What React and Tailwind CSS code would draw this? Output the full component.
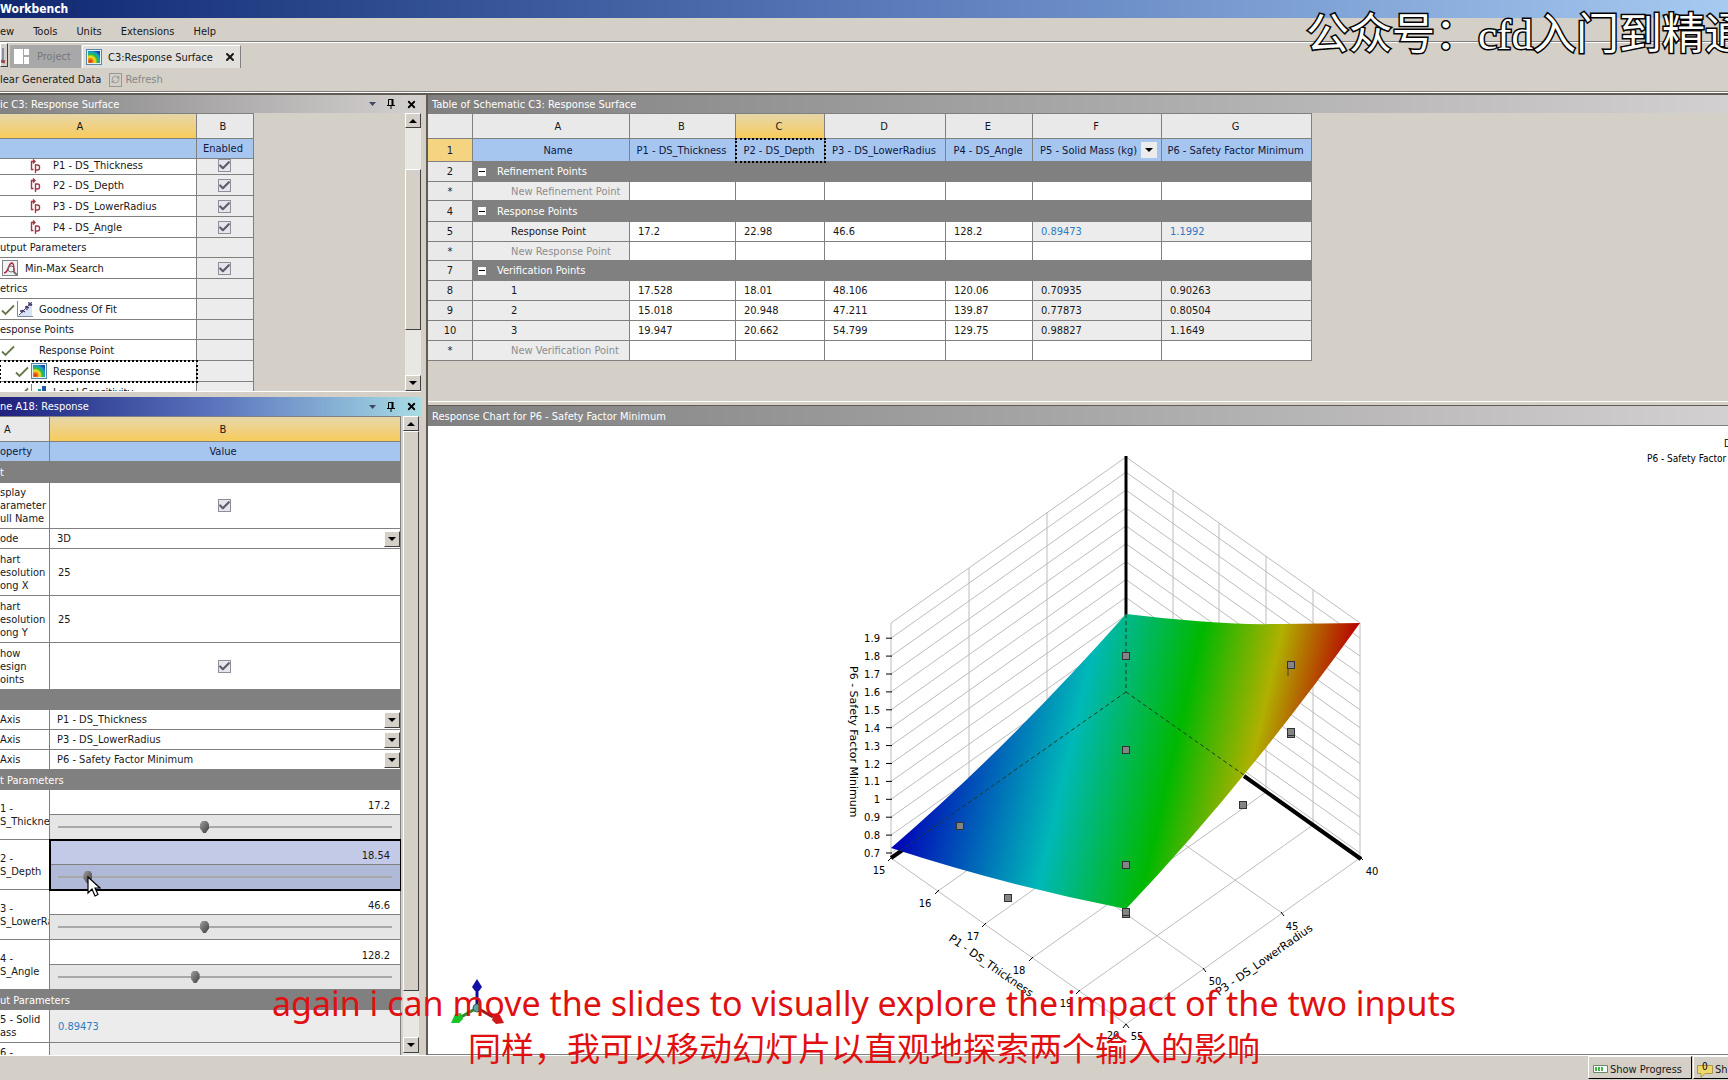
import { useState } from "react";
import { Check, X, RefreshCw } from "lucide-react";

const outlineRows = [
    { label: "P1 - DS_Thickness", kind: "param", height: "h-[16px] align-top", checked: true },
    { label: "P2 - DS_Depth", kind: "param", height: "h-[21px]", checked: true },
    { label: "P3 - DS_LowerRadius", kind: "param", height: "h-[21px]", checked: true },
    { label: "P4 - DS_Angle", kind: "param", height: "h-[21px]", checked: true },
    { label: "utput Parameters", kind: "group", height: "h-[20px]" },
    { label: "Min-Max Search", kind: "minmax", height: "h-[21px]", checked: true },
    { label: "etrics", kind: "group", height: "h-[20px]" },
    { label: "Goodness Of Fit", kind: "fit", height: "h-[21px]" },
    { label: "esponse Points", kind: "group", height: "h-[20px]" },
    { label: "Response Point", kind: "point", height: "h-[21px]" },
    { label: "Response", kind: "response", height: "h-[21px]", selected: true },
];

const pointRows = [
    { id: "2", type: "group", label: "Refinement Points", height: "h-[20px]" },
    { id: "*", type: "new", label: "New Refinement Point", height: "h-[19px]" },
    { id: "4", type: "group", label: "Response Points", height: "h-[21px]" },
    { id: "5", type: "response", label: "Response Point", height: "h-[20px]", values: ["17.2", "22.98", "46.6", "128.2", "0.89473", "1.1992"] },
    { id: "*", type: "new", label: "New Response Point", height: "h-[19px]" },
    { id: "7", type: "group", label: "Verification Points", height: "h-[20px]" },
    { id: "8", type: "verify", label: "1", height: "h-[20px]", values: ["17.528", "18.01", "48.106", "120.06", "0.70935", "0.90263"] },
    { id: "9", type: "verify", label: "2", height: "h-[20px]", values: ["15.018", "20.948", "47.211", "139.87", "0.77873", "0.80504"] },
    { id: "10", type: "verify", label: "3", height: "h-[20px]", values: ["19.947", "20.662", "54.799", "129.75", "0.98827", "1.1649"] },
    { id: "*", type: "new", label: "New Verification Point", height: "h-[20px]" },
];

const cell = "border-r border-b border-[#808080] p-0";
const raised = "border border-t-white border-l-white border-r-[#404040] border-b-[#404040] bg-[#d4d0c8]";

const CheckBox = ({ label }) => (
    <label className="relative flex h-[13px] w-[13px]">
        <input
            type="checkbox"
            defaultChecked
            aria-label={label}
            className="peer h-[13px] w-[13px] appearance-none border border-[#8e8e9c] bg-[#e6e6ea]"
        />
        <Check className="pointer-events-none absolute inset-0 hidden h-[13px] w-[13px] text-[#5c5c6c] peer-checked:block" strokeWidth={4} />
    </label>
);

const DownArrow = () => (
    <svg viewBox="0 0 8 4" className="h-[4px] w-[8px]">
        <path d="M0 0h8L4 4z" />
    </svg>
);

const TickIcon = () => (
    <svg viewBox="0 0 14 14" className="h-[14px] w-[14px] shrink-0">
        <path d="M1 8.5 4.5 12 13 3.5" fill="none" stroke="#66784a" strokeWidth="1.8" />
    </svg>
);

const SurfaceIcon = () => (
    <svg viewBox="0 0 16 16" className="h-[16px] w-[16px] shrink-0">
        <defs>
            <radialGradient id="surface" cx="0.2" cy="0.85" r="1">
                <stop offset="0" stopColor="#e02010" />
                <stop offset="0.2" stopColor="#f08018" />
                <stop offset="0.38" stopColor="#f0e820" />
                <stop offset="0.58" stopColor="#30b840" />
                <stop offset="0.76" stopColor="#18a8c8" />
                <stop offset="1" stopColor="#1848a8" />
            </radialGradient>
        </defs>
        <rect x="0.5" y="0.5" width="15" height="15" fill="#e4f0f4" stroke="#5888a8" />
        <rect x="2" y="2" width="12" height="12" fill="url(#surface)" />
    </svg>
);

const ParamIcon = () => (
    <svg viewBox="0 0 16 16" className="h-[16px] w-[16px] shrink-0" fill="none" stroke="#a03848" strokeWidth="1.4">
        <path d="M4.500 3.500H1.500v8h2M3 1.500l2 2-2 2" />
        <path d="M5.500 15V7h2a2 2 0 0 1 2 2v1a2 2 0 0 1-2 2H5.500" />
    </svg>
);

const MinMaxIcon = () => (
    <svg viewBox="0 0 16 16" className="h-[16px] w-[16px] shrink-0" fill="none">
        <rect x="0.5" y="0.5" width="15" height="15" fill="#f2f2f4" stroke="#848488" />
        <path d="M2 13c5 0 4-10 8-10 2 0 2 5 2 9" stroke="#b02030" strokeWidth="1.6" />
        <circle cx="9" cy="9" r="3" stroke="#707078" />
        <path d="m11 11 4 4" stroke="#707078" strokeWidth="1.8" />
    </svg>
);

const FitIcon = () => (
    <svg viewBox="0 0 16 16" className="h-[16px] w-[16px] shrink-0" fill="none">
        <path d="M1 15 15 1v14z" fill="#d8e4f4" />
        <path d="M0.500 0v15.500H16" stroke="#8088a0" />
        <path d="M2 14 15 1" stroke="#584878" />
        <path d="M3 10h2v2M5 9l3 2M8 6h2v3M9 5l3 2M12 1v3h3M13 2l2 2" stroke="#483868" strokeWidth="1.300" />
    </svg>
);

const BarsIcon = () => (
    <svg viewBox="0 0 16 16" className="h-[16px] w-[16px] shrink-0">
        <path d="M0.500 0v16" stroke="#808898" />
        <path d="M7 5h3v11H7z" fill="#3090a8" />
        <path d="M11 2h4v14h-4z" fill="#2058a8" />
    </svg>
);

const PanelButtons = () => (
    <div className="flex items-center gap-[11px] pr-[4px] text-black">
        <button aria-label="Panel menu" className="text-[#404868]">
            <svg viewBox="0 0 7 4" className="h-[4px] w-[7px]" fill="currentColor">
                <path d="M0 0h7L3.500 4z" />
            </svg>
        </button>
        <button aria-label="Pin panel">
            <svg viewBox="0 0 8 10" className="h-[10px] w-[8px]" fill="none" stroke="#000">
                <path d="M1.500 6V0.500h4V6M0 6.500h8M4 7v3" />
                <path d="M5.500 0v6" strokeWidth="2" />
            </svg>
        </button>
        <button aria-label="Close panel">
            <X className="h-[11px] w-[11px]" strokeWidth={4} />
        </button>
    </div>
);

const ScrollBar = ({ children }) => (
    <div className="flex w-[16px] shrink-0 flex-col bg-[#e9e7e3]">
        <button aria-label="Scroll up" className={`flex h-[15px] items-center justify-center ${raised}`}>
            <svg viewBox="0 0 8 4" className="h-[4px] w-[8px]">
                <path d="M0 4h8L4 0z" />
            </svg>
        </button>
        {children}
        <button aria-label="Scroll down" className={`flex h-[16px] items-center justify-center ${raised}`}>
            <DownArrow />
        </button>
    </div>
);

const rowIcons = {
    param: <ParamIcon />,
    minmax: <MinMaxIcon />,
    fit: <><TickIcon /><FitIcon /></>,
    point: <><TickIcon /><span className="w-[16px]" /></>,
    response: <><TickIcon /><SurfaceIcon /></>,
};

const rowIndent = {
    param: "pl-[30px] gap-[7px]",
    minmax: "pl-[2px] gap-[7px]",
    fit: "pl-[1px] gap-[2px]",
    point: "pl-[1px] gap-[2px]",
    response: "pl-[15px] gap-[2px]",
    group: "",
};

const OutlinePanel = () => (
    <section className="flex h-[297px] w-[421px] shrink-0 flex-col border-b border-white">
        <div className="flex h-[18px] shrink-0 items-center justify-between bg-linear-to-r from-[#828282] to-[#d4d0d0] text-white">
            <h2>ic C3: Response Surface</h2>
            <PanelButtons />
        </div>
        <div className="flex min-h-0 flex-1 justify-between">
            <div className="overflow-hidden">
                <table className="w-[254px] table-fixed border-separate border-spacing-0 border-t border-[#808080] bg-white">
                    <thead>
                        <tr className="h-[25px]">
                            <th className={`${cell} w-[197px] bg-linear-to-b from-[#e6d6a8] to-[#f8cc58] font-normal`}><span className="pr-[36px]">A</span></th>
                            <th className={`${cell} bg-[#e9e9e9] font-normal`}><span className="pr-[4px]">B</span></th>
                        </tr>
                        <tr className="h-[20px] bg-[#a6c6f0]">
                            <td className={cell} />
                            <th className={`${cell} font-normal text-[#101840]`}><span className="pr-[4px]">Enabled</span></th>
                        </tr>
                    </thead>
                    <tbody>
                        {outlineRows.map((row) => (
                            <tr key={row.label} className={row.height}>
                                <td className={`${cell} ${row.selected ? "outline-2 -outline-offset-1 outline-dotted outline-black" : ""}`}>
                                    <div className={`flex h-[13px] items-center whitespace-nowrap ${rowIndent[row.kind]}`}>
                                        {rowIcons[row.kind]}
                                        <span className={row.kind === "fit" || row.kind === "point" || row.kind === "response" ? "pl-[4px]" : ""}>{row.label}</span>
                                    </div>
                                </td>
                                <td className={`${cell} bg-[#ececec]`}>
                                    {row.checked && (
                                        <div className="flex h-[13px] justify-center pr-[2px]">
                                            <CheckBox label={`Enable ${row.label}`} />
                                        </div>
                                    )}
                                </td>
                            </tr>
                        ))}
                        <tr>
                            <td className="border-r border-[#808080] p-0">
                                <div className="flex h-[20px] items-center gap-[2px] pl-[15px]">
                                    <TickIcon />
                                    <BarsIcon />
                                    <span className="pl-[4px]">Local Sensitivity</span>
                                </div>
                            </td>
                            <td className="border-r border-[#808080] bg-[#ececec] p-0" />
                        </tr>
                    </tbody>
                </table>
            </div>
            <ScrollBar>
                <div className="h-[41px]" />
                <div className={`h-[161px] ${raised}`} />
                <div className="flex-1" />
            </ScrollBar>
        </div>
    </section>
);

const GroupRow = ({ label, height }) => (
    <tr className={`${height} bg-[#808080] text-white`}>
        <th colSpan={2} className="p-0 text-left font-normal">{label}</th>
    </tr>
);

const PropertyLabel = ({ lines }) => (
    <th className={`${cell} overflow-hidden text-left font-normal whitespace-nowrap`}>
        {lines.map((line) => (
            <div key={line}>{line}</div>
        ))}
    </th>
);

const SelectRow = ({ lines, value, height }) => (
    <tr className={height}>
        <PropertyLabel lines={lines} />
        <td className={cell}>
            <div className="relative flex h-[18px]">
                <select aria-label={lines[0]} className="w-full appearance-none bg-transparent pl-[7px]">
                    <option>{value}</option>
                </select>
                <span className={`pointer-events-none absolute top-[1px] right-0 flex h-[16px] w-[16px] items-center justify-center ${raised}`}>
                    <DownArrow />
                </span>
            </div>
        </td>
    </tr>
);

const sliderClass =
    "block h-[14px] w-full appearance-none bg-transparent " +
    "[&::-webkit-slider-runnable-track]:h-[2px] [&::-webkit-slider-runnable-track]:bg-[#a8a8a8] " +
    "[&::-webkit-slider-thumb]:-mt-[5px] [&::-webkit-slider-thumb]:h-[12px] [&::-webkit-slider-thumb]:w-[9px] [&::-webkit-slider-thumb]:appearance-none " +
    "[&::-webkit-slider-thumb]:bg-linear-to-br [&::-webkit-slider-thumb]:from-[#a0a0a0] [&::-webkit-slider-thumb]:to-[#404040] " +
    "[&::-webkit-slider-thumb]:[clip-path:polygon(25%_0,75%_0,100%_25%,100%_60%,65%_100%,35%_100%,0_60%,0_25%)]";

const Cursor = () => (
    <svg viewBox="0 0 14 22" className="pointer-events-none absolute top-[36px] left-[37px] z-10 h-[22px] w-[14px]">
        <path d="M1 1v16l4-4 3 7 3-1.500-3-6.500h5z" fill="#fff" stroke="#000" strokeWidth="1.200" />
    </svg>
);

const SliderRow = ({ lines, value, position, active }) => {
    const [pos, setPos] = useState(position);
    return (
        <tr className="h-[50px]">
            <PropertyLabel lines={lines} />
            <td className={`${cell} ${active ? "relative bg-[#c2cae8] outline-2 -outline-offset-1 outline-black" : ""}`}>
                <div className="flex h-[25px] items-center justify-end border-b border-[#808080] pt-[6px] pr-[10px]">
                    <input aria-label={`${lines[1]} value`} defaultValue={value} className="w-full bg-transparent text-right" />
                </div>
                <div className={`flex h-[24px] items-center px-[8px] ${active ? "bg-[#b0bad8]" : "bg-[#e5e5e5]"}`}>
                    <input
                        type="range"
                        min="0"
                        max="1000"
                        value={pos}
                        onChange={(e) => setPos(Number(e.target.value))}
                        aria-label={lines[1]}
                        className={sliderClass}
                    />
                </div>
                {active && <Cursor />}
            </td>
        </tr>
    );
};

const PropertiesPanel = () => (
    <section className="flex min-h-0 w-[421px] flex-1 flex-col overflow-hidden">
        <div className="flex h-[19px] shrink-0 items-center justify-between bg-linear-to-r from-[#20207e] via-[#5a72bc] to-[#a8dce4] text-white">
            <h2>ne A18: Response</h2>
            <PanelButtons />
        </div>
        <div className="flex min-h-0 flex-1 justify-between pr-[2px]">
            <div className="overflow-hidden">
                <table className="w-[401px] table-fixed border-separate border-spacing-0 border-t border-[#808080] bg-white">
                    <thead>
                        <tr className="h-[25px]">
                            <th className={`${cell} w-[50px] bg-[#e9e9e9] font-normal`}><span className="pr-[34px]">A</span></th>
                            <th className={`${cell} bg-linear-to-b from-[#e6d6a8] to-[#f8cc58] font-normal`}><span className="pr-[4px]">B</span></th>
                        </tr>
                        <tr className="h-[20px] bg-[#a6c6f0] text-[#101840]">
                            <th className={`${cell} text-left font-normal`}>operty</th>
                            <th className={`${cell} font-normal`}><span className="pr-[4px]">Value</span></th>
                        </tr>
                    </thead>
                    <tbody>
                        <GroupRow label="t" height="h-[21px]" />
                        <tr className="h-[46px]">
                            <PropertyLabel lines={["splay", "arameter", "ull Name"]} />
                            <td className={cell}>
                                <div className="flex justify-center pr-[2px]"><CheckBox label="Display parameter full name" /></div>
                            </td>
                        </tr>
                        <SelectRow lines={["ode"]} value="3D" height="h-[20px]" />
                        <tr className="h-[47px]">
                            <PropertyLabel lines={["hart", "esolution", "ong X"]} />
                            <td className={cell}><input aria-label="Chart resolution along X" defaultValue="25" className="w-full pl-[8px]" /></td>
                        </tr>
                        <tr className="h-[47px]">
                            <PropertyLabel lines={["hart", "esolution", "ong Y"]} />
                            <td className={cell}><input aria-label="Chart resolution along Y" defaultValue="25" className="w-full pl-[8px]" /></td>
                        </tr>
                        <tr className="h-[47px]">
                            <PropertyLabel lines={["how", "esign", "oints"]} />
                            <td className={cell}>
                                <div className="flex justify-center pr-[2px]"><CheckBox label="Show design points" /></div>
                            </td>
                        </tr>
                        <GroupRow label="" height="h-[20px]" />
                        <SelectRow lines={["Axis"]} value="P1 - DS_Thickness" height="h-[20px]" />
                        <SelectRow lines={["Axis"]} value="P3 - DS_LowerRadius" height="h-[20px]" />
                        <SelectRow lines={["Axis"]} value="P6 - Safety Factor Minimum" height="h-[20px]" />
                        <GroupRow label="t Parameters" height="h-[20px]" />
                        <SliderRow lines={["1 -", "S_Thickness"]} value="17.2" position={437} />
                        <SliderRow lines={["2 -", "S_Depth"]} value="18.54" position={78} active />
                        <SliderRow lines={["3 -", "S_LowerRadius"]} value="46.6" position={437} />
                        <SliderRow lines={["4 -", "S_Angle"]} value="128.2" position={408} />
                        <GroupRow label="ut Parameters" height="h-[20px]" />
                        <tr className="h-[33px]">
                            <PropertyLabel lines={["5 - Solid", "ass"]} />
                            <td className={`${cell} bg-[#ececec]`}><span className="pl-[8px] text-[#2c7cc4]">0.89473</span></td>
                        </tr>
                        <tr className="h-[33px]">
                            <th className={`${cell} text-left align-top font-normal`}><div className="pt-[3px]">6 -</div></th>
                            <td className={`${cell} bg-[#ececec]`} />
                        </tr>
                    </tbody>
                </table>
            </div>
            <ScrollBar>
                <div className={`min-h-0 flex-[0_1_560px] ${raised}`} />
                <div className="h-[46px]" />
            </ScrollBar>
        </div>
    </section>
);

const headers = [
    { letter: "A", name: "Name", width: "w-[157px]" },
    { letter: "B", name: "P1 - DS_Thickness", width: "w-[106px]" },
    { letter: "C", name: "P2 - DS_Depth", width: "w-[89px]" },
    { letter: "D", name: "P3 - DS_LowerRadius", width: "w-[121px]" },
    { letter: "E", name: "P4 - DS_Angle", width: "w-[87px]" },
    { letter: "F", name: "P5 - Solid Mass (kg)", width: "w-[129px]" },
    { letter: "G", name: "P6 - Safety Factor Minimum", width: "w-[150px]" },
];

const PointsPanel = () => (
    <section className="flex h-[307px] shrink-0 flex-col border-b border-white">
        <h2 className="flex h-[18px] items-center bg-linear-to-r from-[#808080] to-[#d2d0d0] pl-[4px] text-white">
            Table of Schematic C3: Response Surface
        </h2>
        <table className="w-[884px] table-fixed border-separate border-spacing-0 border-t border-[#808080] bg-white">
            <thead>
                <tr className="h-[25px] bg-[#e9e9e9]">
                    <td className={`${cell} w-[45px]`} />
                    {headers.map((h) => (
                        <th key={h.letter} className={`${cell} ${h.width} font-normal ${h.letter === "C" ? "bg-linear-to-b from-[#e6d6a8] to-[#f8cc58]" : ""}`}>
                            <span className={h.letter === "A" ? "pl-[14px]" : "pr-[2px]"}>{h.letter}</span>
                        </th>
                    ))}
                </tr>
                <tr className="h-[23px] bg-[#a6c6f0] text-[#101840]">
                    <th className={`${cell} bg-[#f4d480] font-normal`}>1</th>
                    {headers.map((h) => (
                        <th
                            key={h.letter}
                            className={`${cell} font-normal whitespace-nowrap ${h.letter === "C" ? "outline-2 -outline-offset-1 outline-dotted outline-black" : ""}`}
                        >
                            {h.letter === "F" ? (
                                <div className="flex items-center justify-between pr-[4px] pl-[7px]">
                                    {h.name}
                                    <button aria-label="Choose unit" className="flex h-[16px] w-[16px] items-center justify-center bg-[#ececec]">
                                        <DownArrow />
                                    </button>
                                </div>
                            ) : (
                                <span className={h.letter === "A" ? "pl-[14px]" : "pr-[2px]"}>{h.name}</span>
                            )}
                        </th>
                    ))}
                </tr>
            </thead>
            <tbody>
                {pointRows.map((row) => (
                    <tr key={row.label} className={row.height}>
                        <th className={`${cell} bg-[#e9e9e9] font-normal`}>{row.id}</th>
                        {row.type === "group" ? (
                            <td colSpan={7} className={`${cell} bg-[#808080] text-white`}>
                                <div className="flex items-center gap-[11px] pl-[5px]">
                                    <button aria-label={`Collapse ${row.label}`} className="flex h-[8px] w-[8px] items-center justify-center bg-white">
                                        <span className="h-px w-[6px] bg-black" />
                                    </button>
                                    {row.label}
                                </div>
                            </td>
                        ) : (
                            <>
                                <td className={`${cell} bg-[#ececec] whitespace-nowrap ${row.type === "new" ? "text-[#8c8c8c]" : ""}`}>
                                    <span className="pl-[38px]">{row.label}</span>
                                </td>
                                {[0, 1, 2, 3, 4, 5].map((i) => (
                                    <td
                                        key={i}
                                        className={`${cell} ${row.values && i > 3 ? "bg-[#ececec]" : ""} ${row.type === "response" && i > 3 ? "text-[#2c7cc4]" : ""}`}
                                    >
                                        {row.values && <span className="pl-[8px]">{row.values[i]}</span>}
                                    </td>
                                ))}
                            </>
                        )}
                    </tr>
                ))}
            </tbody>
        </table>
    </section>
);

const zTicks = ["0.7", "0.8", "0.9", "1", "1.1", "1.2", "1.3", "1.4", "1.5", "1.6", "1.7", "1.8", "1.9"];
const zY = (i) => 853 - i * 17.9;

const axisLabels = [
    ["15", 879, 874], ["16", 925, 907], ["17", 973, 940], ["18", 1019, 974], ["19", 1066, 1007], ["20", 1113, 1039],
    ["55", 1137, 1040], ["50", 1215, 985], ["45", 1292, 930], ["40", 1372, 875],
];

const designPoints = [
    [1126, 656], [1291, 665], [1126, 750], [1291, 734], [1291, 732], [1243, 805],
    [960, 826], [1008, 898], [1126, 865], [1126, 914], [1126, 912],
];

const ResponseChart = () => (
    <svg viewBox="428 426 1300 628" className="h-full w-full bg-white font-['DejaVu_Sans',sans-serif] text-[11px]">
        <defs>
            <linearGradient id="response" gradientUnits="userSpaceOnUse" x1="939" y1="640" x2="1335" y2="731">
                <stop offset="0" stopColor="#0000b8" />
                <stop offset="0.374" stopColor="#00b8b8" />
                <stop offset="0.626" stopColor="#00b800" />
                <stop offset="0.818" stopColor="#b0b000" />
                <stop offset="1" stopColor="#b80000" />
            </linearGradient>
        </defs>

        {/* Walls and floor grid */}
        <g stroke="#bcbcbc" fill="none">
            <path d="M891 858V623L1126 457L1360 623V858M969 803V568M1047 748V512M1173 725V490M1219 758V523M1266 792V556M1313 825V590" />
            {zTicks.map((t, i) => (
                <path key={t} d={`M891 ${zY(i)}L1126 ${zY(i) - 166}L1360 ${zY(i)}`} />
            ))}
            <path d="M891 858L1126 1024L1360 858M938 891L1173 725M985 924L1219 758M1032 958L1266 792M1079 991L1313 825M1204 969L969 803M1282 913L1047 748" />
        </g>

        {/* Axes */}
        <path d="M1126 456V616" stroke="#000" strokeWidth="3" />
        <path d="M891 858L904 849M1244 776L1361 859" stroke="#000" strokeWidth="4" />
        <path d="M939 890l-4 4M986 923l-4 4M1033 957l-4 4M1080 990l-4 4M891 858l-3 3M1126 1024l-3 4M1126 1024l3 4M1203 968l3 4M1281 912l3 4M1360 857l3 3" stroke="#000" fill="none" />

        <path d="M891 848Q1008 747 1126 614C1180 620 1225 625 1280 624L1360 623Q1243 786 1126 909Q1008 886 891 848z" fill="url(#response)" />
        <path d="M1126 614V692M1126 692L900 851M1126 692L1244 775" stroke="#1c3c1c" strokeDasharray="4 3" fill="none" />

        <path d="M1288 668v8" stroke="#404040" />
        {designPoints.map(([x, y]) => (
            <rect key={`${x}-${y}`} x={x - 3.5} y={y - 3.5} width="7" height="7" fill="#848484" stroke="#303438" />
        ))}

        <g className="text-[10px]">
            {zTicks.map((t, i) => (
                <g key={t}>
                    <path d={`M886 ${zY(i)}h6`} stroke="#000" />
                    <text x="880" y={zY(i) + 4} textAnchor="end">{t}</text>
                </g>
            ))}
            {axisLabels.map(([t, x, y]) => (
                <text key={t} x={x} y={y} textAnchor="middle">{t}</text>
            ))}
        </g>
        <text transform="translate(850 666) rotate(90)">P6 - Safety Factor Minimum</text>
        <text transform="translate(948 940) rotate(35)">P1 - DS_Thickness</text>
        <text transform="translate(1219 996) rotate(-35)">P3 - DS_LowerRadius</text>
        <text x="1724" y="447" className="font-['DejaVu_Sans_Condensed','Noto_Sans',sans-serif] text-[10px]">D</text>
        <text x="1647" y="462" className="font-['DejaVu_Sans_Condensed','Noto_Sans',sans-serif] text-[10px]">P6 - Safety Factor</text>

        {/* Orientation triad */}
        <path d="M477 1008V986" stroke="#101090" strokeWidth="3" />
        <path d="M477 979l5 8-3 4h-4l-3-4z" fill="#1010a8" />
        <path d="M475 1009L461 1017" stroke="#30882c" strokeWidth="3" />
        <path d="M451 1023l4-9 6-1 2 6-4 4z" fill="#18c428" />
        <path d="M479 1009L493 1017" stroke="#a01818" strokeWidth="3" />
        <path d="M504 1023l-4-8-6-1-2 6 4 4z" fill="#d01818" />
        <circle cx="477" cy="1008" r="4" fill="#60a0a8" stroke="#386068" />
    </svg>
);

const App = () => {
    return (
        <div className="relative flex h-screen flex-col overflow-hidden bg-[#d4d0c8] font-['DejaVu_Sans_Condensed','Noto_Sans',sans-serif] text-[11px] leading-[13px] text-[#181818]">
            {/* Title bar */}
            <header className="flex h-[18px] shrink-0 items-center bg-linear-to-r from-[#102870] via-[#5878b8] to-[#a6caf0]">
                <h1 className="text-[12px] font-bold text-white">Workbench</h1>
            </header>

            {/* Menu */}
            <nav className="flex h-[24px] shrink-0 items-center gap-[19px] border-b border-[#808080] pt-[3px]">
                <button>ew</button>
                <button>Tools</button>
                <button>Units</button>
                <button>Extensions</button>
                <button>Help</button>
            </nav>

            {/* Tabs */}
            <div className="flex h-[26px] shrink-0 items-end border-t border-white">
                <button aria-label="Tool" className={`mr-[2px] mb-[1px] flex h-[24px] w-[8px] items-end ${raised}`}>
                    <svg viewBox="0 0 6 20" className="h-[20px] w-[6px]" fill="none">
                        <path d="M2 2v13" stroke="#7078a0" strokeWidth="1.500" />
                        <path d="M0 15l4 1" stroke="#a04848" strokeWidth="3" />
                    </svg>
                </button>
                <button className="flex h-[23px] w-[71px] items-center gap-[8px] bg-[#a8a8a8] pl-[4px] text-[#787878]">
                    <svg viewBox="0 0 15 15" className="h-[15px] w-[15px]" fill="#fff">
                        <path d="M0 0h9v15H0zM10 0h5v6h-5zM10 8h5v7h-5z" />
                    </svg>
                    Project
                </button>
                <div className="ml-[1px] flex h-[23px] w-[159px] items-center border-t border-r border-l border-t-white border-r-[#808080] border-l-white bg-[#e2e0dc] pl-[3px]">
                    <SurfaceIcon />
                    <span className="flex-1 pl-[6px] whitespace-nowrap">C3:Response Surface</span>
                    <button aria-label="Close tab" className="pr-[4px]">
                        <X className="h-[12px] w-[12px]" strokeWidth={4} />
                    </button>
                </div>
            </div>

            {/* Toolbar */}
            <div className="flex h-[24px] shrink-0 items-center border-b border-[#808080]">
                <button>lear Generated Data</button>
                <button className="ml-[8px] flex items-center gap-[3px] text-[#888888]">
                    <span className="flex h-[14px] w-[13px] items-center justify-center border border-[#989898]">
                        <RefreshCw className="h-[9px] w-[9px]" />
                    </span>
                    Refresh
                </button>
            </div>

            <main className="flex min-h-0 flex-1 border-t border-white">
                <div className="flex w-[428px] shrink-0 flex-col border-t-2 border-r-2 border-[#605c54]">
                    <OutlinePanel />
                    <div className="h-[5px] shrink-0" />
                    <PropertiesPanel />
                </div>
                <div className="flex min-w-0 flex-1 flex-col border-t-2 border-[#605c54]">
                    <PointsPanel />
                    <div className="h-[3px] shrink-0" />
                    <section className="flex min-h-0 flex-1 flex-col border-b border-[#808080]">
                        <h2 className="flex h-[21px] shrink-0 items-center border-t border-b border-t-[#605c54] border-b-[#808080] bg-linear-to-r from-[#808080] to-[#d2d0d0] pt-[1px] pl-[4px] text-white">
                            Response Chart for P6 - Safety Factor Minimum
                        </h2>
                        <div className="min-h-0 flex-1">
                            <ResponseChart />
                        </div>
                    </section>
                </div>
            </main>

            {/* Status bar */}
            <footer className="flex h-[25px] shrink-0 justify-end border-t border-white pb-[1px] whitespace-nowrap">
                <button className="flex w-[104px] items-center gap-[2px] border border-t-white border-r-black border-b-black border-l-white pt-[3px] pl-[4px]">
                    <svg viewBox="0 0 15 8" className="h-[8px] w-[15px]">
                        <path d="M0.500 0.500h14v7H0.500z" fill="#fff" stroke="#688868" />
                        <path d="M2 2h2v4H2zM5 2h2v4H5zM8 2h2v4H8z" fill="#40b848" />
                    </svg>
                    Show Progress
                </button>
                <button className="ml-[1px] flex w-[35px] items-center gap-[2px] overflow-hidden border-t border-b border-l border-t-white border-b-black border-l-white pt-[3px] pl-[3px]">
                    <svg viewBox="0 0 16 18" className="h-[18px] w-[16px] shrink-0">
                        <path d="M0.500 5.500h15v8H8l-4 4v-4H0.500z" fill="#f0d868" stroke="#a89850" />
                        <text x="5" y="10" className="text-[10px]">0</text>
                    </svg>
                    Sh
                </button>
            </footer>

            {/* Watermark */}
            <p className="pointer-events-none absolute top-[10px] left-[1306px] text-[43px] leading-[50px] whitespace-nowrap text-white [-webkit-text-stroke:3px_#000] [paint-order:stroke_fill] font-['Liberation_Serif','Noto_Sans_CJK_SC',serif]">
                公众号：cfd入门到精通
            </p>

            {/* Captions */}
            <div className="pointer-events-none absolute inset-x-0 bottom-[11px] text-center text-[#e01010]">
                <p className="font-['Noto_Sans',sans-serif] text-[34px] leading-[44px]">again i can move the slides to visually explore the impact of the two inputs</p>
                <p className="font-['Noto_Sans_CJK_SC',sans-serif] text-[33px] leading-[44px]">同样，我可以移动幻灯片以直观地探索两个输入的影响</p>
            </div>
        </div>
    );
};

export default App;
